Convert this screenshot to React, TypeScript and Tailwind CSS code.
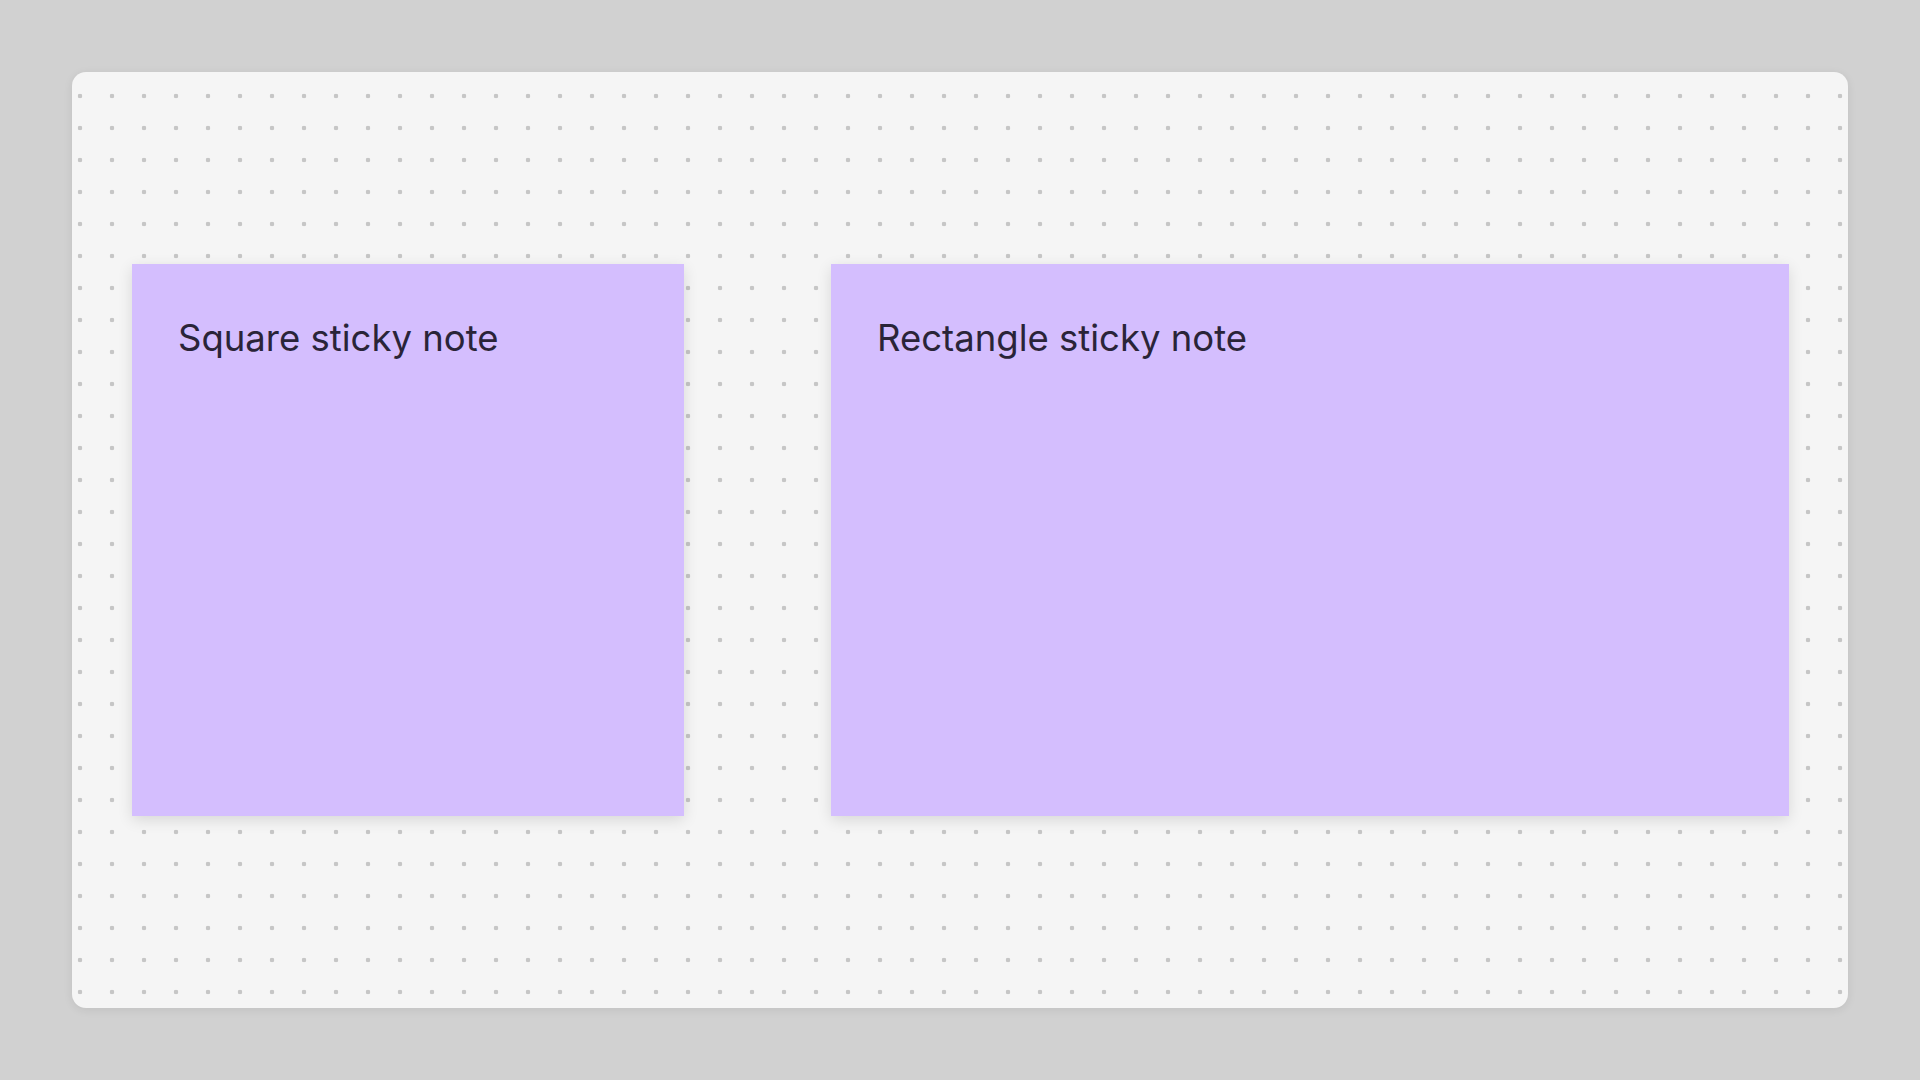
export default function App() {
  return (
    <main className="flex h-screen w-full bg-[#d1d1d1] p-[72px]">
      <section className="flex flex-1 items-center gap-[147px] rounded-[14px] bg-[#f5f5f5] bg-[radial-gradient(circle,#c6c6c6_2px,transparent_2.6px)] bg-[size:32px_32px] bg-[position:-8px_8px] pl-[60px] pr-[59px] shadow-[0_2px_10px_rgba(0,0,0,0.08)]">
        <Nota titulo="Square sticky note" className="w-[552px]" />
        <Nota titulo="Rectangle sticky note" className="flex-1" />
      </section>
    </main>
  );
}

function Nota({ titulo, className }: { titulo: string; className: string }) {
  return (
    <div
      className={`h-[552px] bg-[#d4befe] pl-[46px] pr-12 pt-[53px] shadow-[0_4px_14px_rgba(0,0,0,0.12)] ${className}`}
    >
      <p className="font-['Inter',sans-serif] text-[36.5px] leading-[1.2] text-[#2a2438]">
        {titulo}
      </p>
    </div>
  );
}
